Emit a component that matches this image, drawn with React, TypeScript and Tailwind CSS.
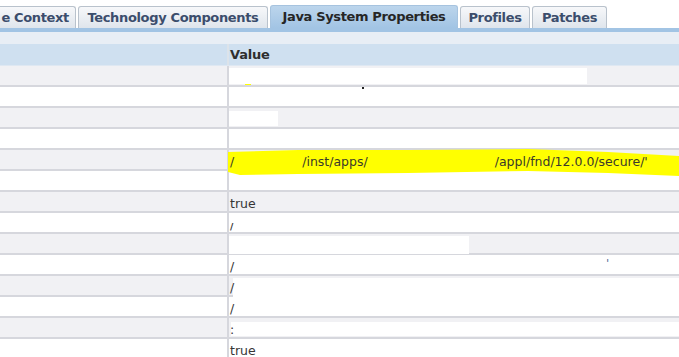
import React from 'react';

type Row = {
  mask?: { left: number; width: number; top: number; height: number };
  content?: React.ReactNode;
};

const tabs = [
  { label: 'e Context', width: 'w-[76px]', active: false, first: true },
  { label: 'Technology Components', width: 'w-[190px]', active: false },
  { label: 'Java System Properties', width: 'w-[188px]', active: true },
  { label: 'Profiles', width: 'w-[70px]', active: false },
  { label: 'Patches', width: 'w-[75px]', active: false },
];

// masks are relative to the value cell (which starts at x=229)
const rows: Row[] = [
  { mask: { left: 0, width: 358, top: 2, height: 16 } },
  {},
  { mask: { left: 0, width: 49, top: 3, height: 15 } },
  {},
  { content: 'highlight' },
  {},
  { content: 'true' },
  { content: 'cut-slash' },
  { mask: { left: 0, width: 240, top: 2, height: 18 } },
  { content: 'slash-tick' },
  { mask: { left: 4, width: 460, top: 2, height: 19 }, content: '/' },
  { content: '/' },
  { mask: { left: 2, width: 460, top: 4, height: 14 }, content: ':' },
  { content: 'true' },
];

function Tab({ label, width, active, first }: { label: string; width: string; active: boolean; first?: boolean }) {
  return (
    <div
      className={
        'flex items-center rounded-t-[3px] border border-b-0 text-[13px] font-bold tracking-[-0.35px] whitespace-nowrap ' +
        width +
        (first ? ' justify-end pr-[6px] border-l-0 rounded-tl-none' : ' justify-center') +
        (active
          ? ' bg-gradient-to-b from-[#bcd5ec] to-[#a2c4e4] border-[#a6c3df] text-[#262626] h-[23px]'
          : ' bg-gradient-to-b from-[#f7f8fa] to-[#dfe5ec] border-[#b9c2cc] text-[#3b4d6c] h-[22px]')
      }
    >
      {label}
    </div>
  );
}

function ValueContent({ content }: { content: React.ReactNode }) {
  if (content === 'highlight') {
    return (
      <>
        <svg className="absolute left-[-1px] top-[-1px]" width="452" height="30" viewBox="0 0 452 30">
          <path
            d="M0 3 L70 1 L180 1 L300 0 L380 3 L452 7 L452 27 L380 24 L300 22 L180 24 L70 25 L12 26 L0 23 Z"
            fill="#ffff00"
          />
        </svg>
        <div className="relative flex items-end h-full pb-[1px] leading-none text-[#3a3a2a]">
          <span>/</span>
          <span className="ml-[68px]">/inst/apps/</span>
          <span className="ml-[127px]">/appl/fnd/12.0.0/secure/</span>
          <span>'</span>
        </div>
      </>
    );
  }
  if (content === 'slash-tick') {
    return (
      <div className="relative flex items-end h-full pb-[1px] leading-none">
        <span>/</span>
        <span className="ml-[372px] text-[10px] self-start mt-[4px] text-[#2a5a8a]">'</span>
      </div>
    );
  }
  if (content === 'cut-slash') {
    return (
      <>
        <div className="relative flex items-end h-full pb-[1px] leading-none">/</div>
        <div className="absolute left-0 top-0 w-[300px] h-[10px] bg-white" />
      </>
    );
  }
  if (content) {
    return <div className="relative flex items-end h-full pb-[1px] leading-none">{content}</div>;
  }
  return null;
}

export default function App() {
  return (
    <div className="w-[679px] h-[357px] overflow-hidden bg-white text-[#363636] [font-family:'DejaVu_Sans',sans-serif]">
      {/* tab strip */}
      <div className="h-[28px] flex items-end gap-[2px] bg-white">
        {tabs.map((t) => (
          <Tab key={t.label} {...t} />
        ))}
      </div>
      <div className="h-[4px] bg-[#a2c4e4]" />
      <div className="h-[12px] bg-[#e8eef5]" />

      {/* header */}
      <div className="h-[22px] flex bg-[#cfe0f0] border-b border-[#dfe8f2]">
        <div className="w-[229px] border-r-2 border-[#dce3ea]" />
        <div className="flex-1 pl-[1px] flex items-center text-[13px] font-bold text-[#2e2e2e] tracking-[-0.2px]">
          Value
        </div>
      </div>

      {/* rows */}
      {rows.map((r, i) => {
        const gray = i % 2 === 0;
        return (
          <div
            key={i}
            className={
              'h-[21px] flex border-b-2 border-[#d6d7dd] text-[12.5px] ' + (gray ? 'bg-[#f1f1f4]' : 'bg-white')
            }
          >
            <div className="w-[229px] shrink-0 border-r-2 border-[#d6d7dd]" />
            <div className="relative flex-1 pl-[1px]">
              {r.mask && (
                <div
                  className="absolute bg-white"
                  style={{ left: r.mask.left, width: r.mask.width, top: r.mask.top, height: r.mask.height }}
                />
              )}
              {i === 0 && <div className="absolute left-[16px] top-[18px] w-[6px] h-[1px] bg-[#ffff00]" />}
              {i === 1 && <div className="absolute left-[133px] top-[0px] w-[2px] h-[2px] bg-[#222]" />}
              <ValueContent content={r.content} />
            </div>
          </div>
        );
      })}
    </div>
  );
}
